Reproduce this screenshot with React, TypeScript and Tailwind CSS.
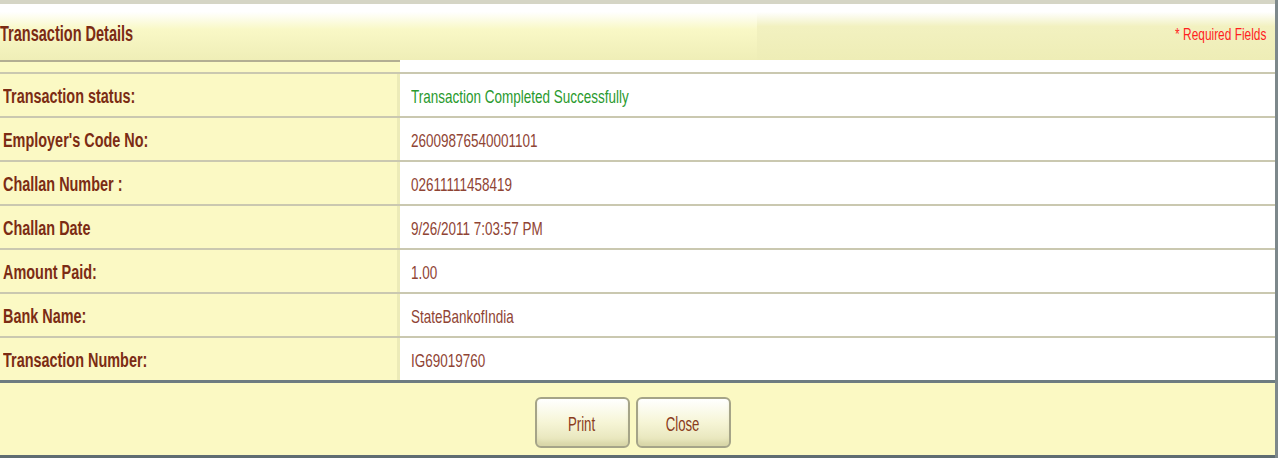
import React from 'react';

const rows: { label: string; value: string; ok?: boolean }[] = [
    { label: 'Transaction status:', value: 'Transaction Completed Successfully', ok: true },
    { label: "Employer's Code No:", value: '26009876540001101' },
    { label: 'Challan Number :', value: '02611111458419' },
    { label: 'Challan Date', value: '9/26/2011 7:03:57 PM' },
    { label: 'Amount Paid:', value: '1.00' },
    { label: 'Bank Name:', value: 'StateBankofIndia' },
    { label: 'Transaction Number:', value: 'IG69019760' },
];

function Squeeze({ children, className = '' }: { children: React.ReactNode; className?: string }) {
    return <span className={`inline-block whitespace-nowrap ${className}`}>{children}</span>;
}

function Btn({ label }: { label: string }) {
    return (
        <button className="w-[95px] h-[51px] rounded-[6px] border-2 border-[#a5a488] bg-gradient-to-b from-[#ffffff] via-[#f6f5d6] to-[#e3e1b4] shadow-[inset_0_-6px_4px_-2px_#d8d6a8] flex items-center justify-center pt-[4px]">
            <Squeeze className="origin-center scale-x-[0.66] text-[20px] text-[#8a3b1c]">{label}</Squeeze>
        </button>
    );
}

export default function App() {
    return (
        <div className="w-[1278px] h-[458px] bg-white border-r-[3px] border-[#7d888b] overflow-hidden flex flex-col font-['Liberation_Sans',Arial,sans-serif]">
            <div className="h-[4px] bg-[#d5d5c5]" />
            {/* header band */}
            <div className="h-[56px] flex">
                <div className="w-[757px] bg-gradient-to-b from-[#ffffff] from-[14%] via-[#f9f8c6] via-[45%] to-[#efeeb7] flex items-center pt-[2px]">
                    <Squeeze className="origin-left scale-x-[0.66] text-[22px] font-bold text-[#7b2a14]">
                        Transaction Details
                    </Squeeze>
                </div>
                <div className="flex-1 bg-gradient-to-b from-[#ffffff] from-[14%] via-[#f2f1c0] via-[40%] to-[#eeedb6] flex items-center justify-end pr-[9px] pt-[6px]">
                    <Squeeze className="origin-right scale-x-[0.7] text-[17px] text-[#ff1f1f]">* Required Fields</Squeeze>
                </div>
            </div>
            {/* spacer strip */}
            <div className="h-[12px] flex">
                <div className="w-[400px] bg-[#fbf9c4] border-t-2 border-[#b3ae93]" />
                <div className="flex-1 bg-white" />
            </div>
            {/* rows */}
            <div className="flex flex-col">
                {rows.map((r) => (
                    <div key={r.label} className="h-[44px] flex border-t-2 border-[#cac8b0]">
                        <div className="w-[400px] bg-[#fbf9c4] border-r-[3px] border-[#ecebb8] flex items-center pl-[3px] pt-[4px]">
                            <Squeeze className="origin-left scale-x-[0.74] text-[19.5px] font-bold text-[#7b2c14]">{r.label}</Squeeze>
                        </div>
                        <div className="flex-1 bg-white flex items-center pl-[11px] pt-[4px]">
                            <Squeeze
                                className={`origin-left scale-x-[0.71] text-[19px] ${r.ok ? 'text-[#2a9a2e]' : 'text-[#8f4434]'}`}
                            >
                                {r.value}
                            </Squeeze>
                        </div>
                    </div>
                ))}
            </div>
            {/* footer */}
            <div className="flex-1 bg-[#fbf9c3] border-t-[3px] border-[#6d7c80] border-b-[3px] border-b-[#5f6d71] flex items-center justify-center gap-[6px] pt-[6px] pr-[10px]">
                <Btn label="Print" />
                <Btn label="Close" />
            </div>
        </div>
    );
}
